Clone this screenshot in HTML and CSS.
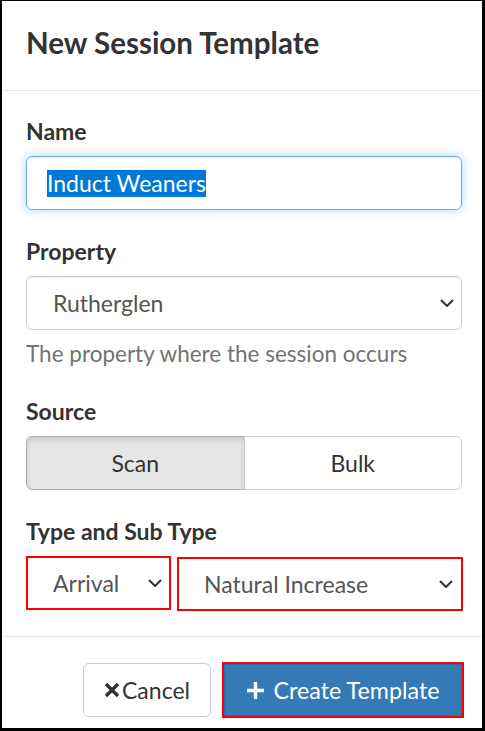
FILE: index.html
```html
<!DOCTYPE html>
<html lang="en">
<head>
<meta charset="utf-8">
<title>New Session Template</title>
<link rel="stylesheet" href="styles.css">
</head>
<body>
<div class="panel">
  <div class="modal-header">
    <h4 class="title">New Session Template</h4>
  </div>
  <div class="modal-body">
    <div class="group">
      <label class="label">Name</label>
      <div class="control focus"><span class="sel">Induct Weaners</span></div>
    </div>
    <div class="group">
      <label class="label">Property</label>
      <div class="control select">
        <span>Rutherglen</span>
        <svg class="chev" width="14" height="8" viewBox="0 0 14 8"><path d="M1 1 L7 7 L13 1" fill="none" stroke="#333" stroke-width="2"/></svg>
      </div>
      <div class="help">The property where the session occurs</div>
    </div>
    <div class="group">
      <label class="label">Source</label>
      <div class="btn-group">
        <div class="seg active">Scan</div>
        <div class="seg">Bulk</div>
      </div>
    </div>
    <div class="group last">
      <label class="label">Type and Sub Type</label>
      <div class="type-row">
        <div class="control select marked type">
          <span>Arrival</span>
          <svg class="chev" width="14" height="8" viewBox="0 0 14 8"><path d="M1 1 L7 7 L13 1" fill="none" stroke="#333" stroke-width="2"/></svg>
        </div>
        <div class="control select marked subtype">
          <span>Natural Increase</span>
          <svg class="chev" width="14" height="8" viewBox="0 0 14 8"><path d="M1 1 L7 7 L13 1" fill="none" stroke="#333" stroke-width="2"/></svg>
        </div>
      </div>
    </div>
  </div>
  <div class="modal-footer">
    <div class="btn cancel">
      <svg width="16" height="16" viewBox="0 0 16 16"><path d="M2 2 L14 14 M14 2 L2 14" stroke="#333" stroke-width="3.4" stroke-linecap="butt"/></svg>
      <span>Cancel</span>
    </div>
    <div class="btn create">
      <svg width="19" height="19" viewBox="0 0 19 19"><path d="M9.5 1 V18 M1 9.5 H18" stroke="#fff" stroke-width="3.4"/></svg>
      <span>Create Template</span>
    </div>
  </div>
</div>
</body>
</html>
```

FILE: styles.css
```css
html, body {
  margin: 0;
  padding: 0;
}
body {
  background: #000;
  font-family: Lato, "Noto Sans", "Liberation Sans", sans-serif;
  color: #333;
  font-size: 23px;
}
.panel {
  margin: 1px 3px 0 2px;
  height: 727px;
  background: #fff;
  display: flex;
  flex-direction: column;
  overflow: hidden;
}
.modal-header {
  padding: 21px 20px 27px 24px;
  border-bottom: 1px solid #e5e5e5;
}
.title {
  margin: 0;
  font-size: 29.5px;
  line-height: 41px;
  font-weight: 700;
}
.modal-body {
  box-sizing: border-box;
  height: 545px;
  flex: none;
  padding: 23px 20px 0 24px;
}
.group {
  margin-bottom: 24px;
}
.group.last {
  margin-bottom: 0;
}
.label {
  display: block;
  font-weight: 700;
  line-height: 32px;
  padding-top: 1px;
  margin-bottom: 9px;
}
.control {
  box-sizing: border-box;
  height: 54px;
  border: 1px solid #ccc;
  border-radius: 6px;
  padding: 0 20px;
  display: flex;
  align-items: center;
  color: #555;
  box-shadow: inset 0 1px 1px rgba(0,0,0,.075);
}
.control.focus {
  border-color: #66afe9;
  box-shadow: inset 0 1px 1px rgba(0,0,0,.075), 0 0 8px rgba(102,175,233,.6);
}
.sel {
  background: #0078d7;
  color: #fff;
  line-height: 27px;
}
.select {
  justify-content: space-between;
  padding: 0 7px 0 26px;
}
.chev {
  display: block;
  flex: none;
}
.help {
  margin-top: 8px;
  line-height: 32px;
  font-size: 22.5px;
  color: #737373;
}
.btn-group {
  display: flex;
  height: 54px;
}
.seg {
  flex: 1;
  box-sizing: border-box;
  border: 1px solid #ccc;
  display: flex;
  align-items: center;
  justify-content: center;
  color: #333;
  background: #fff;
}
.seg:first-child {
  border-radius: 6px 0 0 6px;
}
.seg:last-child {
  border-radius: 0 6px 6px 0;
  margin-left: -1px;
}
.seg.active {
  background: #e6e6e6;
  border-color: #adadad;
  box-shadow: inset 0 3px 5px rgba(0,0,0,.125);
}
.type-row {
  display: flex;
  gap: 6px;
  align-items: flex-start;
  margin-right: -2px;
}
.marked {
  border: 2px solid #f00;
  border-radius: 0;
  box-shadow: none;
  padding-left: 25px;
}
.type {
  width: 145px;
  flex: none;
  padding-right: 7px;
}
.subtype {
  width: 286px;
  flex: none;
  margin-top: 1px;
  padding-right: 8px;
}
.modal-footer {
  border-top: 1px solid #e5e5e5;
  padding: 26px 20px 0 24px;
  display: flex;
  justify-content: flex-end;
  align-items: center;
  gap: 13px;
}
.btn {
  box-sizing: border-box;
  height: 54px;
  border: 1px solid #ccc;
  border-radius: 6px;
  background: #fff;
  color: #333;
  display: flex;
  align-items: center;
  justify-content: center;
  gap: 2px;
}
.btn svg {
  display: block;
  flex: none;
}
.cancel {
  width: 128px;
}
.create {
  width: 238px;
  height: 52px;
  background: #337ab7;
  border-color: #2e6da4;
  border-radius: 0;
  color: #fff;
  outline: 2px solid #f00;
  gap: 8px;
  font-size: 23.3px;
}
```
